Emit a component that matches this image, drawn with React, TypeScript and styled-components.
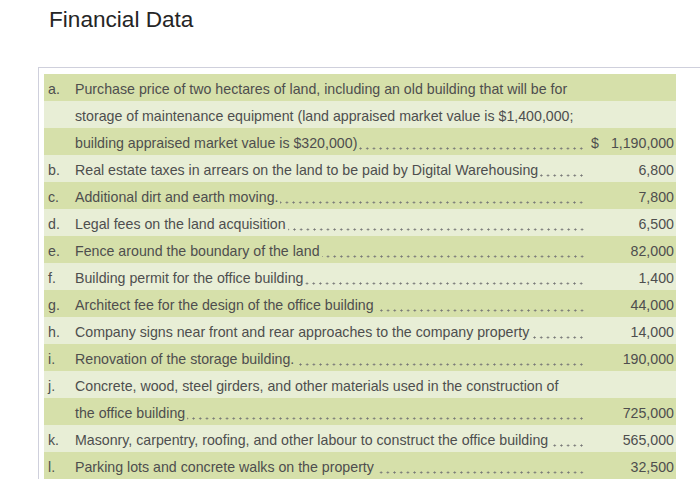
import React from "react";
import styled, { createGlobalStyle } from "styled-components";

const Global = createGlobalStyle`
  html, body { margin: 0; padding: 0; background: #ffffff; }
  body { font-family: "Liberation Sans", Arial, sans-serif; overflow: hidden; }
`;

const Page = styled.div`
  width: 700px;
  height: 481px;
  overflow: hidden;
`;

const Title = styled.h1`
  margin: 0;
  padding: 7px 0 0 49px;
  height: 60px;
  box-sizing: border-box;
  font-family: "Liberation Sans", Arial, sans-serif;
  font-weight: 400;
  font-size: 22.6px;
  line-height: 26px;
  color: #252525;
`;

const Box = styled.div`
  margin-left: 38px;
  margin-top: 7px;
  border-top: 1px solid #cfd0dc;
  border-left: 1px solid #cfd0dc;
  padding: 6px 0 0 5px;
`;

const Table = styled.div`
  width: 632px;
  display: flex;
  flex-direction: column;
`;

const Row = styled.div<{ $dark: boolean }>`
  display: grid;
  grid-template-columns: 31px 513px 15px 73px;
  height: 27px;
  box-sizing: border-box;
  padding-top: 3px;
  background: ${(p) => (p.$dark ? "#d6e0aa" : "#e8eed6")};
  color: #4e4e4e;
  font-size: 14.2px;
  line-height: 24px;
  white-space: nowrap;
`;

const Letter = styled.span`
  padding-left: 4px;
`;

const Desc = styled.span`
  display: flex;
  min-width: 0;
  padding-right: 2px;
`;

const Leader = styled.span`
  flex: 1;
  min-width: 0;
  margin-left: 2px;
  background-image: radial-gradient(circle, #767676 0.85px, transparent 1.25px);
  background-size: 6.7px 3px;
  background-repeat: repeat-x;
  background-position: right 1px top 15.5px;
`;

const Cur = styled.span`
  padding-left: 3px;
`;

const Amount = styled.span`
  text-align: right;
  padding-right: 2px;
`;

type Line = { l?: string; t: string; dots?: boolean; cur?: string; amt?: string };

const lines: Line[] = [
  { l: "a.", t: "Purchase price of two hectares of land, including an old building that will be for" },
  { t: "storage of maintenance equipment (land appraised market value is $1,400,000;" },
  { t: "building appraised market value is $320,000)", dots: true, cur: "$", amt: "1,190,000" },
  { l: "b.", t: "Real estate taxes in arrears on the land to be paid by Digital Warehousing", dots: true, amt: "6,800" },
  { l: "c.", t: "Additional dirt and earth moving.", dots: true, amt: "7,800" },
  { l: "d.", t: "Legal fees on the land acquisition", dots: true, amt: "6,500" },
  { l: "e.", t: "Fence around the boundary of the land", dots: true, amt: "82,000" },
  { l: "f.", t: "Building permit for the office building", dots: true, amt: "1,400" },
  { l: "g.", t: "Architect fee for the design of the office building", dots: true, amt: "44,000" },
  { l: "h.", t: "Company signs near front and rear approaches to the company property", dots: true, amt: "14,000" },
  { l: "i.", t: "Renovation of the storage building.", dots: true, amt: "190,000" },
  { l: "j.", t: "Concrete, wood, steel girders, and other materials used in the construction of" },
  { t: "the office building", dots: true, amt: "725,000" },
  { l: "k.", t: "Masonry, carpentry, roofing, and other labour to construct the office building", dots: true, amt: "565,000" },
  { l: "l.", t: "Parking lots and concrete walks on the property", dots: true, amt: "32,500" },
];

export default function App() {
  return (
    <Page>
      <Global />
      <Title>Financial Data</Title>
      <Box>
        <Table>
          {lines.map((ln, i) => (
            <Row key={i} $dark={i % 2 === 0}>
              <Letter>{ln.l ?? ""}</Letter>
              <Desc>
                <span>{ln.t}</span>
                {ln.dots && <Leader />}
              </Desc>
              <Cur>{ln.cur ?? ""}</Cur>
              <Amount>{ln.amt ?? ""}</Amount>
            </Row>
          ))}
        </Table>
      </Box>
    </Page>
  );
}
